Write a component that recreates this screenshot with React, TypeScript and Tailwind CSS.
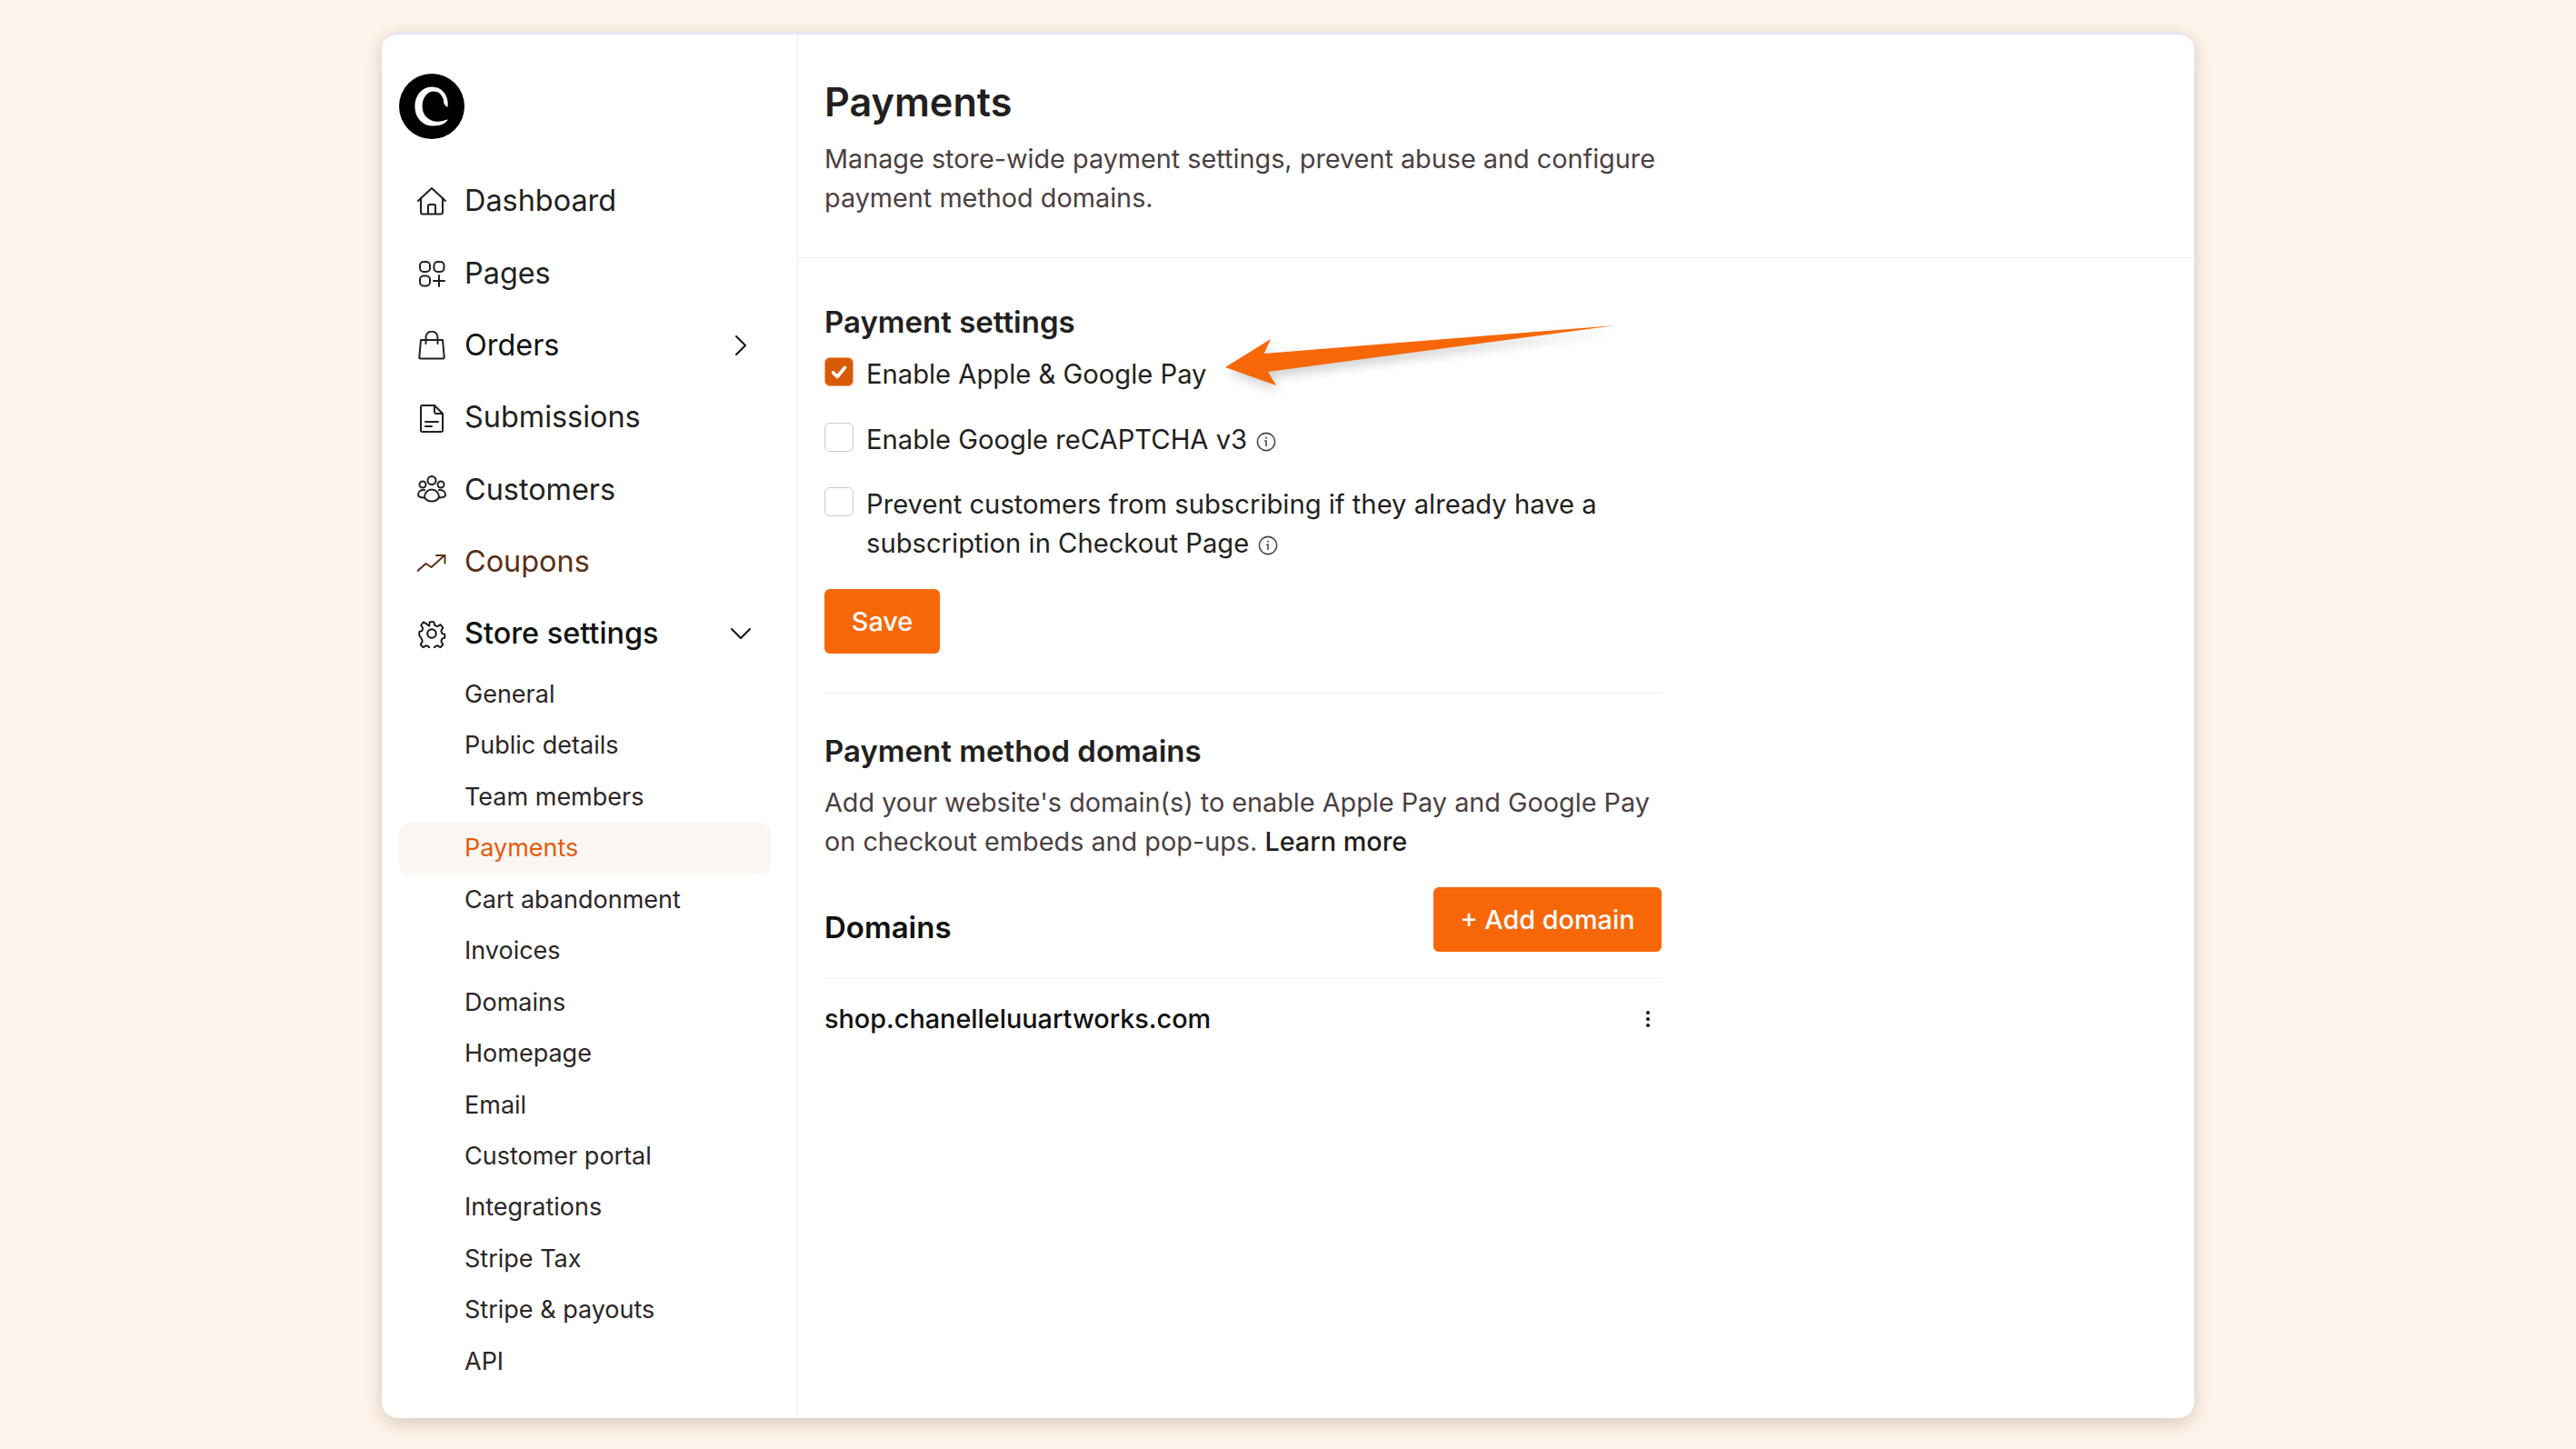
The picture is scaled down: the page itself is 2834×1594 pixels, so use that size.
import React from "react";

const Ico = ({ children, color = "#231f20" }: { children: React.ReactNode; color?: string }) => (
  <svg viewBox="0 0 32 32" width="32" height="32" fill="none" stroke={color} strokeWidth="2" strokeLinecap="round" strokeLinejoin="round" className="shrink-0">
    {children}
  </svg>
);

const icons: Record<string, React.ReactNode> = {
  home: (
    <Ico>
      <path d="M1 15 16 1l15 14" />
      <path d="M4 12v15.500a2 2 0 0 0 2 2h20a2 2 0 0 0 2-2V12" />
      <path d="M12 29V20.500a1.500 1.500 0 0 1 1.500-1.500h5a1.500 1.500 0 0 1 1.500 1.500V29" />
    </Ico>
  ),
  pages: (
    <Ico>
      <rect x="3" y="3" width="11" height="11" rx="4" />
      <rect x="18.500" y="3" width="11" height="11" rx="4" />
      <rect x="3" y="18.500" width="11" height="11" rx="4" />
      <path d="M24 18v12M18 24h12" />
    </Ico>
  ),
  bag: (
    <Ico>
      <path d="M4 10h24l1.700 19a1.500 1.500 0 0 1-1.500 1.500H3.800A1.500 1.500 0 0 1 2.300 29z" />
      <path d="M9.500 14V7a6.500 6.500 0 0 1 13 0v7" />
    </Ico>
  ),
  doc: (
    <Ico>
      <path d="M4 3.500A1.500 1.500 0 0 1 5.500 2H19l9 9v18.500a1.500 1.500 0 0 1-1.500 1.500h-21A1.500 1.500 0 0 1 4 29.500z" />
      <path d="M19 2v7a2 2 0 0 0 2 2h7" />
      <path d="M9 20h14M9 25h7" />
    </Ico>
  ),
  users: (
    <Ico>
      <circle cx="16" cy="5.500" r="4.500" />
      <circle cx="6" cy="10" r="3.500" />
      <circle cx="26" cy="10" r="3.500" />
      <path d="M8 24c0-5 3.500-8.500 8-8.500s8 3.500 8 8.500c-1.500 3-4.500 4.500-8 4.500S9.500 27 8 24z" />
      <path d="M8 16c-3.500-.5-7 1.500-7 5 0 2 2 3.500 7 3.500M24 16c3.500-.5 7 1.500 7 5 0 2-2 3.500-7 3.500" />
    </Ico>
  ),
  trend: (
    <Ico color="#5a3017">
      <path d="M0.500 26 9.500 18l6 4L30 9" />
      <path d="M21 9h9.500v8.500" />
    </Ico>
  ),
  gear: (
    <Ico color="#111">
      <circle cx="16" cy="16" r="4.800" />
      <path d="M13.500 2h5l1 4 3.300 1.400 3.600-2.200 3 3.700-2.200 3.500.9 3.300 3.400 1.200v4.200l-3.400 1.200-.9 3.300 2.200 3.500-3 3.300-3.600-2.100-3.300 1.400-1 4h-5l-1-4-3.300-1.400-3.600 2.100-3-3.300 2.200-3.500-.9-3.300L1 18.100v-4.200l3.400-1.200.9-3.300-2.200-3.500 3-3.700 3.600 2.200L13 7z" transform="translate(1.300 1.300) scale(.92)" />
    </Ico>
  ),
};

const Chevron = ({ down }: { down?: boolean }) => (
  <svg viewBox="0 0 24 24" width="24" height="24" fill="none" stroke="#111" strokeWidth="2" strokeLinecap="round" strokeLinejoin="round" className="shrink-0">
    {down ? <path d="M2 7l10 10L22 7" /> : <path d="M7 2l10 10L7 22" />}
  </svg>
);

const Info = () => (
  <svg viewBox="0 0 24 24" width="22" height="22" fill="none" stroke="#4b3f42" strokeWidth="1.700" strokeLinecap="round" className="inline-block align-[-3px] ml-[2px]">
    <circle cx="12" cy="12" r="10.500" />
    <path d="M10.500 11h1.500v6" />
    <circle cx="12" cy="7.200" r="0.400" />
  </svg>
);

const NavItem = ({ icon, label, color = "#231f20", weight = "font-normal", chevron }: { icon: string; label: string; color?: string; weight?: string; chevron?: React.ReactNode }) => (
  <div className="h-[79.3px] flex items-center pl-[20px] pr-[21px] gap-[20px]">
    {icons[icon]}
    <span className={`text-[32.4px] leading-none flex-1 ${weight}`} style={{ color }}>
      {label}
    </span>
    {chevron}
  </div>
);

const subs = ["General", "Public details", "Team members", "Payments", "Cart abandonment", "Invoices", "Domains", "Homepage", "Email", "Customer portal", "Integrations", "Stripe Tax", "Stripe & payouts", "API"];

const Check = ({ checked }: { checked?: boolean }) =>
  checked ? (
    <span className="block w-[32px] h-[32px] rounded-[6px] bg-[#d95a06] flex items-center justify-center border border-[#f0a877]">
      <svg viewBox="0 0 24 24" width="22" height="22" fill="none" stroke="#fff" strokeWidth="4" strokeLinecap="round" strokeLinejoin="round">
        <path d="M5 13l5 5L19 7" />
      </svg>
    </span>
  ) : (
    <span className="block w-[32px] h-[32px] rounded-[6px] bg-white border border-[#cfc8ca]" />
  );

export default function App() {
  return (
    <div className="w-full min-h-[1594px] bg-[#fdf3ea] pt-[35px] text-[#231f20]" style={{ fontFamily: "Inter, 'Noto Sans', sans-serif" }}>
      <div className="relative mx-auto w-[1994px] h-[1525px] bg-white rounded-[18px] border-t-[3px] border-[#e9e6f0] flex shadow-[0_6px_18px_rgba(90,60,30,0.22)]">
        <aside className="w-[458px] shrink-0 border-r border-[#efefef] pl-[19px] pr-[29px] pt-[43px]">
          <div className="w-[72px] h-[72px] rounded-full bg-black flex items-center justify-center">
            <svg viewBox="0 0 72 72" width="72" height="72" fill="#fff" stroke="#fff" strokeWidth="1.200" strokeLinejoin="round">
              <path d="M53 36C54 24 47 15 36 15 25 15 18 25 18 36 18 48 26 57 38 57 45 57 50 55 53 51 48 53 44 54 39 53 31 52 25 45 25 36 25 27 30 19 38 19 46 19 50 26 50 33z" />
            </svg>
          </div>
          <div className="mt-[29px]">
            <NavItem icon="home" label="Dashboard" />
            <NavItem icon="pages" label="Pages" />
            <NavItem icon="bag" label="Orders" color="#111" chevron={<Chevron />} />
            <NavItem icon="doc" label="Submissions" />
            <NavItem icon="users" label="Customers" />
            <NavItem icon="trend" label="Coupons" color="#5a3017" />
            <NavItem icon="gear" label="Store settings" color="#111" weight="font-medium" chevron={<Chevron down />} />
          </div>
          <div className="mt-[-1px]">
            {subs.map((s) => (
              <div key={s} className={`h-[56.45px] flex items-center pl-[72px] text-[27px] rounded-[12px] ${s === "Payments" ? "bg-[#faf7f3] text-[#e8590c]" : "text-[#2b2628]"}`}>
                {s}
              </div>
            ))}
          </div>
        </aside>
        <main className="flex-1">
          <header className="h-[246px] border-b border-[#efefef] pl-[29px] pt-[47px]">
            <h1 className="text-[43.2px] leading-[54px] font-semibold text-[#231f20]">Payments</h1>
            <p className="mt-[14px] w-[921px] text-[28.8px] leading-[43px] text-[#4b3f42]">
              Manage store-wide payment settings, prevent abuse and configure payment method domains.
            </p>
          </header>
          <section className="ml-[29px] w-[921px] pt-[50px]">
            <h2 className="text-[33px] leading-[40px] font-semibold">Payment settings</h2>
            <div className="mt-[16px] flex gap-[14px] text-[29.2px] leading-[43px]">
              <div className="pt-[3px] shrink-0"><Check checked /></div>
              <span>Enable Apple &amp; Google Pay</span>
            </div>
            <div className="mt-[29px] flex gap-[14px] text-[29.2px] leading-[43px]">
              <div className="pt-[3px] shrink-0"><Check /></div>
              <span>Enable Google reCAPTCHA v3 <Info /></span>
            </div>
            <div className="mt-[28px] flex gap-[14px] text-[29.2px] leading-[43px]">
              <div className="pt-[3px] shrink-0"><Check /></div>
              <span>
                Prevent customers from subscribing if they already have a subscription in Checkout Page <Info />
              </span>
            </div>
            <button className="mt-[29px] w-[127px] h-[71px] rounded-[6px] bg-[#f76707] text-white text-[28.8px] font-medium">Save</button>
            <div className="mt-[43px] border-t border-[#efefef]" />
            <h2 className="mt-[43px] text-[33px] leading-[40px] font-semibold">Payment method domains</h2>
            <p className="mt-[15px] text-[28.8px] leading-[43px] text-[#4b3f42]">
              Add your website's domain(s) to enable Apple Pay and Google Pay on checkout embeds and pop-ups. <span className="font-medium text-[#231f20]">Learn more</span>
            </p>
            <div className="mt-[29px] flex items-start justify-between">
              <h3 className="mt-[24px] text-[33px] leading-[40px] font-semibold text-[#111]">Domains</h3>
              <button className="w-[251px] h-[71px] rounded-[6px] bg-[#f76707] text-white text-[28.8px] font-medium">+ Add domain</button>
            </div>
            <div className="mt-[29px] border-t border-[#efefef] h-[89px] flex items-center justify-between">
              <span className="text-[28.8px] font-medium text-[#111]">shop.chanelleluuartworks.com</span>
              <svg viewBox="0 0 6 20" width="6" height="20" fill="#111" className="mr-[12px]">
                <circle cx="3" cy="3" r="2" />
                <circle cx="3" cy="10" r="2" />
                <circle cx="3" cy="17" r="2" />
              </svg>
            </div>
          </section>
        </main>
        <svg viewBox="0 0 460 100" width="460" height="100" className="absolute left-[920px] top-[310px] overflow-visible" style={{ filter: "drop-shadow(3px 6px 6px rgba(0,0,0,0.18))" }}>
          <path d="M8 56 58 25 50.600 41 437 10 55 61 64 76z" fill="#f76707" />
        </svg>
      </div>
    </div>
  );
}
